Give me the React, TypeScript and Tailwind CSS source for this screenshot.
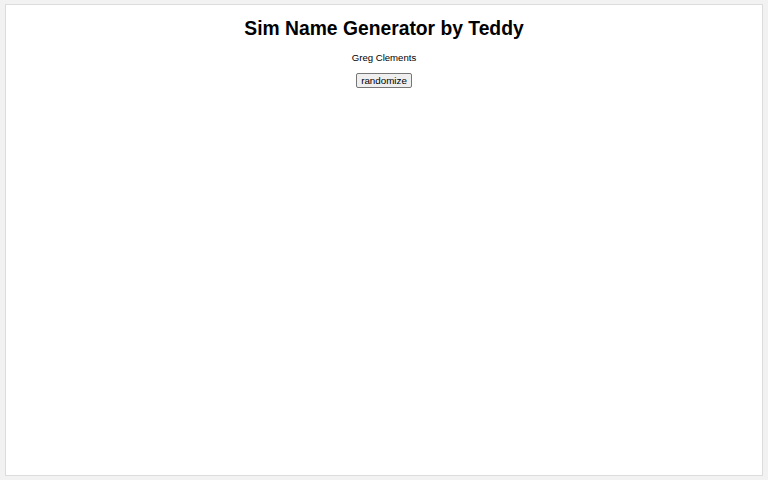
export default function App() {
  return (
    <div className="h-[480px] w-[768px] bg-[#f2f2f2] px-[5px] pt-[4px] pb-[4px] font-['Liberation_Sans',Arial,sans-serif]">
      <div className="flex h-[472px] flex-col items-center border border-[#dcdcdc] bg-white">
        <h1 className="mt-[12px] text-[19.3px] font-bold leading-[23px] text-black">Sim Name Generator by Teddy</h1>
        <p className="mt-[12px] text-[9.6px] leading-[12px] text-black">Greg Clements</p>
        <button className="mt-[9px] h-[15px] rounded-[2px] border border-[#767676] bg-[#efefef] px-[4px] text-[9.8px] leading-[12px] text-black">
          randomize
        </button>
      </div>
    </div>
  );
}
